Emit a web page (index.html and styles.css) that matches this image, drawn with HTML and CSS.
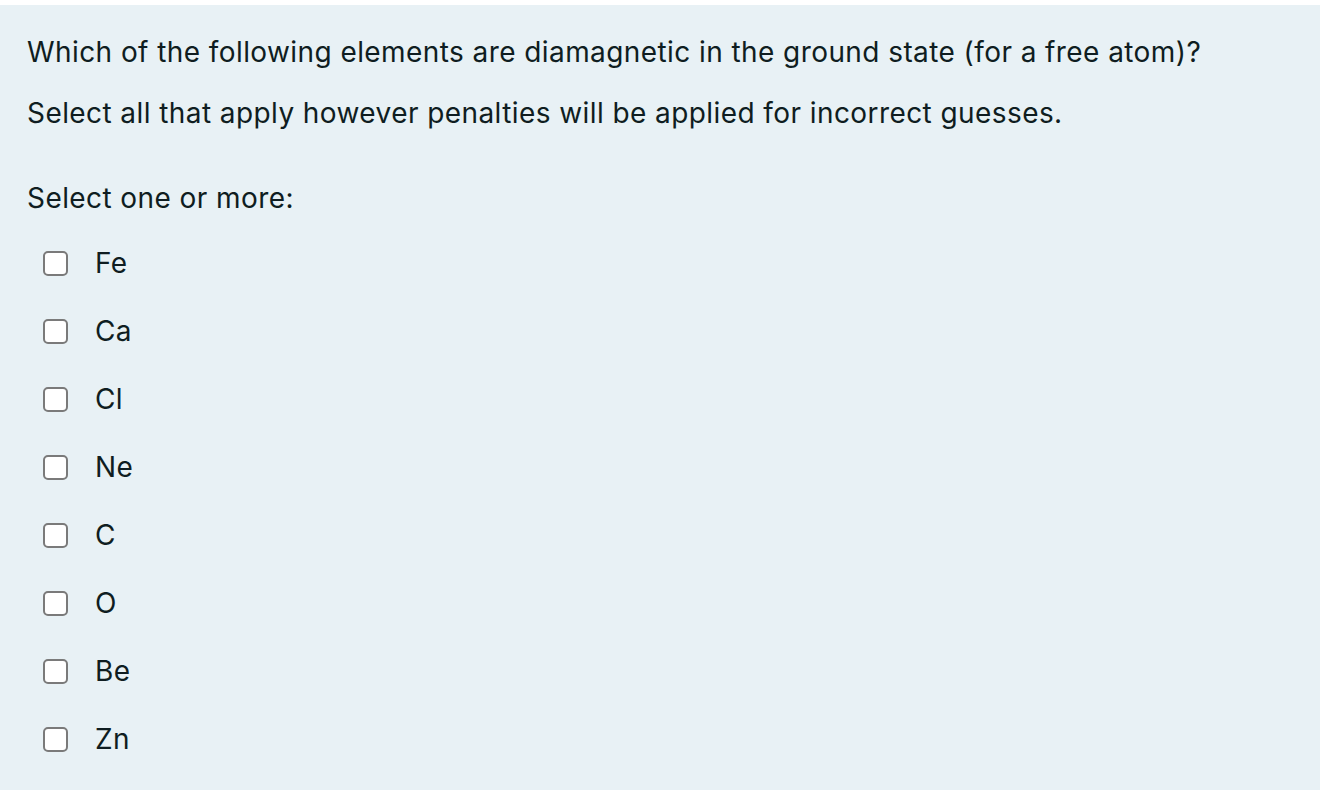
FILE: index.html
```html
<!DOCTYPE html>
<html>
<head>
<meta charset="utf-8">
<link rel="stylesheet" href="styles.css">
</head>
<body>
<div class="que">
  <div class="qtext">
    <p class="line">Which of the following elements are diamagnetic in the ground state (for a free atom)?</p>
    <p class="line second">Select all that apply however penalties will be applied for incorrect guesses.</p>
  </div>
  <div class="prompt">Select one or more:</div>
  <div class="answers">
    <label class="opt"><span class="box"></span><span class="lbl">Fe</span></label>
    <label class="opt"><span class="box"></span><span class="lbl">Ca</span></label>
    <label class="opt"><span class="box"></span><span class="lbl">Cl</span></label>
    <label class="opt"><span class="box"></span><span class="lbl">Ne</span></label>
    <label class="opt"><span class="box"></span><span class="lbl">C</span></label>
    <label class="opt"><span class="box"></span><span class="lbl">O</span></label>
    <label class="opt"><span class="box"></span><span class="lbl">Be</span></label>
    <label class="opt"><span class="box"></span><span class="lbl">Zn</span></label>
  </div>
</div>
</body>
</html>
```
FILE: styles.css
```css
html, body {
  margin: 0;
  padding: 0;
  background: #ffffff;
}
body {
  font-family: Inter, "Liberation Sans", Arial, sans-serif;
  color: #0f1d21;
  font-size: 28px;
  letter-spacing: 0.42px;
}
.que {
  margin-top: 5px;
  height: 785px;
  background: #e8f1f5;
  padding: 27px 27px 0 27px;
  box-sizing: border-box;
}
.line {
  margin: 0;
  line-height: 40px;
}
.second {
  margin-top: 21px;
}
.prompt {
  margin-top: 45px;
  line-height: 40px;
}
.answers {
  margin-top: 11px;
  display: flex;
  flex-direction: column;
}
.opt {
  height: 68px;
  display: flex;
  align-items: center;
  padding-left: 16px;
}
.box {
  width: 25px;
  height: 25px;
  box-sizing: border-box;
  border: 2px solid #7a7a7a;
  border-radius: 5px;
  background: #ffffff;
  flex: none;
}
.lbl {
  margin-left: 27px;
  line-height: 40px;
}
```
